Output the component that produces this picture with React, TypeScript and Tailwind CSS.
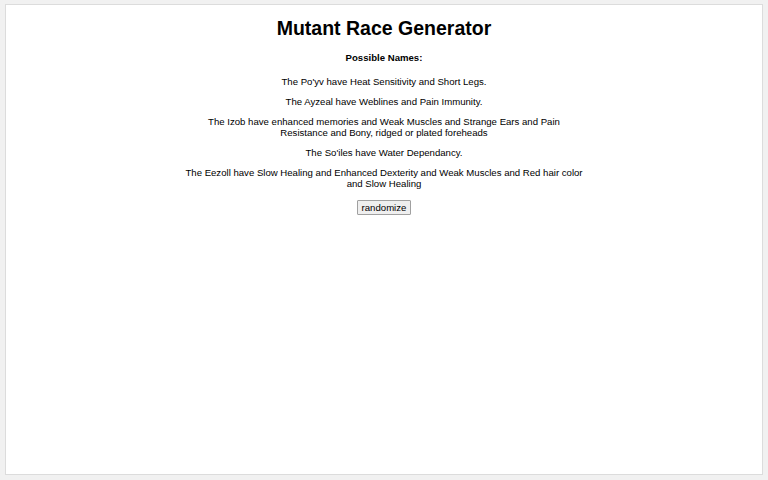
export default function App() {
  const races = [
    "The Po'yv have Heat Sensitivity and Short Legs.",
    "The Ayzeal have Weblines and Pain Immunity.",
    "The Izob have enhanced memories and Weak Muscles and Strange Ears and Pain Resistance and Bony, ridged or plated foreheads",
    "The So'iles have Water Dependancy.",
    "The Eezoll have Slow Healing and Enhanced Dexterity and Weak Muscles and Red hair color and Slow Healing",
  ];
  return (
    <div
      className="w-[768px] h-[480px] bg-[#f1f1f1] pt-[4px] pb-[4px] px-[5px]"
      style={{ fontFamily: '"Liberation Sans", Arial, sans-serif' }}
    >
      <div className="h-[471px] bg-white border border-[#dcdcdc] flex flex-col items-center text-black">
        <h1 className="mt-[11px] text-[19.5px] leading-[24px] font-bold">Mutant Race Generator</h1>
        <div className="mt-[12px] text-[9.6px] leading-[12px] font-bold">Possible Names:</div>
        <div className="mt-[12px] w-[400px] flex flex-col items-center gap-[9px] text-[9.6px] leading-[11px] text-center">
          {races.map((r) => (
            <p key={r}>{r}</p>
          ))}
        </div>
        <button className="mt-[11px] h-[15px] px-[4px] text-[9.6px] leading-[12px] border border-[#a0a0a0] bg-[#efefef] rounded-[1px] text-black">
          randomize
        </button>
      </div>
    </div>
  );
}
